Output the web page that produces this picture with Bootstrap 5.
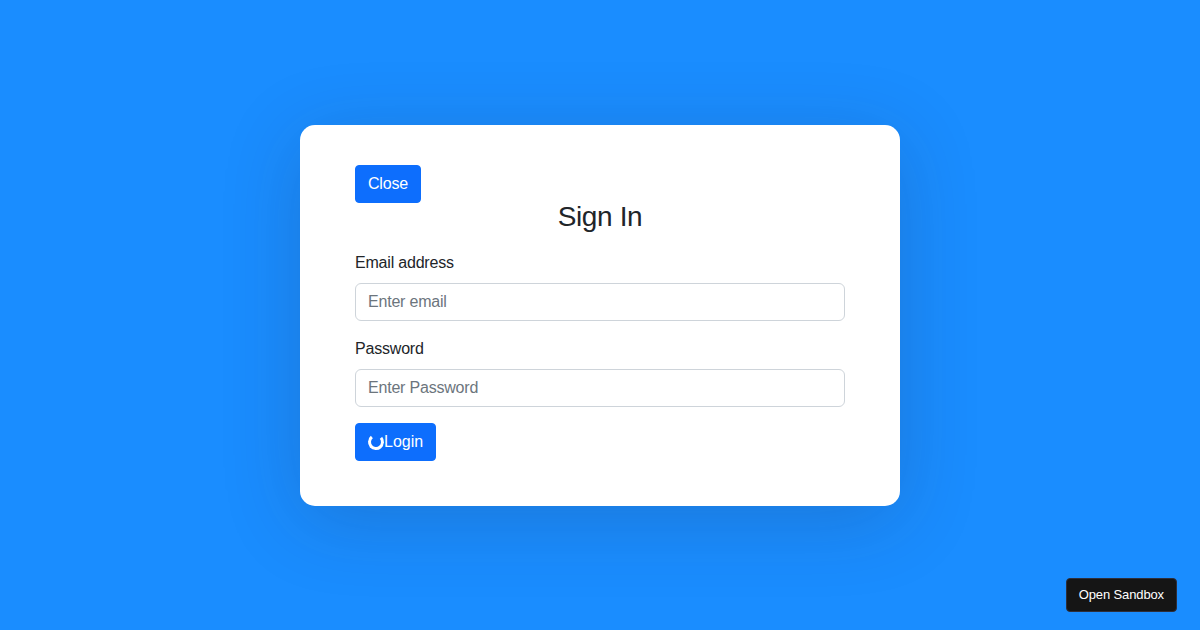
<!DOCTYPE html>
<html lang="en">
<head>
<meta charset="utf-8">
<title>Sign In</title>
<link rel="stylesheet" href="https://cdn.jsdelivr.net/npm/bootstrap@5.3.0/dist/css/bootstrap.min.css">
<style>
html, body { height: 100%; }
body { background: #1a8dff; color: #212529; font-family: "Liberation Sans", Arial, sans-serif; letter-spacing: -.2px; overflow: hidden; }
.stage { height: 630px; }
.login-panel { width: 600px; padding: 40px 55px 45px; border-radius: 15px; background: #fff; box-shadow: 0 14px 80px rgba(34,35,58,.2); }
.login-title { font-size: 28px; line-height: 28px; margin: 0 0 20px; font-weight: 500; letter-spacing: -.35px; }
.login-panel .form-label { margin-bottom: 8px; }
.login-panel .form-control { border-color: #ced4da; color: #212529; letter-spacing: -.2px; }
.login-panel .form-control::placeholder { color: #6c757d; }
.login-panel .btn { border-radius: 4px; background: #0d6efd; letter-spacing: -.2px; }
.login-panel .login-submit { letter-spacing: 0; }
.login-spin { animation: none; transform: rotate(-85deg); vertical-align: -3px; }
.sandbox-btn { position: fixed; right: 23px; bottom: 18px; background: #151515; color: #fff; font-size: 13px; line-height: 16px; padding: 8px 12px; border-radius: 4px; border: 1px solid #2e2e3a; letter-spacing: -.12px; }
</style>
</head>
<body>
<div class="stage d-flex align-items-center justify-content-center">
  <div class="login-panel">
    <form>
      <button type="button" class="btn btn-primary d-block">Close</button>
      <h3 class="login-title text-center">Sign In</h3>
      <div class="mb-3">
        <label class="form-label" for="em">Email address</label>
        <input id="em" type="email" class="form-control" placeholder="Enter email">
      </div>
      <div class="mb-3">
        <label class="form-label" for="pw">Password</label>
        <input id="pw" type="password" class="form-control" placeholder="Enter Password">
      </div>
      <button type="button" class="btn btn-primary login-submit"><span class="spinner-border spinner-border-sm login-spin"></span>Login</button>
    </form>
  </div>
</div>
<button type="button" class="sandbox-btn">Open Sandbox</button>
<script src="https://cdn.jsdelivr.net/npm/bootstrap@5.3.0/dist/js/bootstrap.bundle.min.js"></script>
</body>
</html>
